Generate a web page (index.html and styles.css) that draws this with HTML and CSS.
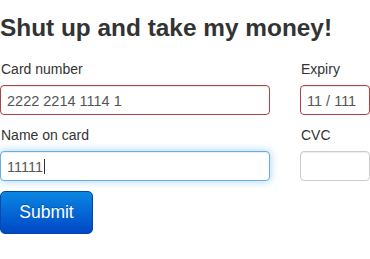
FILE: index.html
```html
<!DOCTYPE html>
<html>
<head>
<meta charset="utf-8">
<link rel="stylesheet" href="styles.css">
</head>
<body>
<form class="pay">
  <h1 class="title">Shut up and take my money!</h1>
  <div class="row">
    <div class="group wide">
      <label class="lbl">Card number</label>
      <input class="field error" type="text" value="2222 2214 1114 1">
    </div>
    <div class="group narrow">
      <label class="lbl">Expiry</label>
      <input class="field error" type="text" value="11 / 111">
    </div>
  </div>
  <div class="row">
    <div class="group wide">
      <label class="lbl">Name on card</label>
      <div class="field focus">11111<span class="caret"></span></div>
    </div>
    <div class="group narrow">
      <label class="lbl">CVC</label>
      <input class="field" type="text" value="">
    </div>
  </div>
  <button class="btn" type="button">Submit</button>
</form>
</body>
</html>
```
FILE: styles.css
```css
html, body {
  margin: 0;
  padding: 0;
  background: #fff;
}
body {
  font-family: "Liberation Sans", Arial, sans-serif;
  font-size: 14px;
  line-height: 20px;
  color: #333;
  overflow: hidden;
}
.pay {
  width: 370px;
}
.title {
  margin: 15px 0 18px;
  font-size: 24.4px;
  line-height: 26px;
  font-weight: bold;
  color: #333;
}
.row {
  display: flex;
  gap: 30px;
  margin-bottom: 10px;
}
.group {
  display: flex;
  flex-direction: column;
}
.wide { width: 270px; }
.narrow { width: 70px; }
.lbl {
  display: block;
  margin-bottom: 6px;
  font-weight: normal;
  color: #333;
  padding-left: 1px;
}
.field {
  box-sizing: border-box;
  width: 100%;
  height: 30px;
  margin: 0;
  padding: 4px 6px 2px;
  font-family: "Liberation Sans", Arial, sans-serif;
  font-size: 14.5px;
  line-height: 22px;
  color: #555;
  background: #fff;
  border: 1px solid #ccc;
  border-radius: 4px;
  box-shadow: inset 0 1px 1px rgba(0,0,0,.075);
  outline: none;
}
.field.error {
  border-color: #a94442;
}
.field.focus {
  border-color: #66afe9;
  box-shadow: inset 0 1px 1px rgba(0,0,0,.075), 0 0 8px rgba(102,175,233,.6);
}
.caret {
  display: inline-block;
  width: 1px;
  height: 15px;
  margin-left: 1px;
  vertical-align: -2px;
  background: #333;
}
.btn {
  display: block;
  box-sizing: border-box;
  width: 93px;
  height: 43px;
  padding: 0;
  font-family: "Liberation Sans", Arial, sans-serif;
  font-size: 17.5px;
  color: #fff;
  text-shadow: 0 -1px 0 rgba(0,0,0,.25);
  background: linear-gradient(#0a86e2, #0048c6);
  border: 1px solid #0448a6;
  border-radius: 5px;
}
```
